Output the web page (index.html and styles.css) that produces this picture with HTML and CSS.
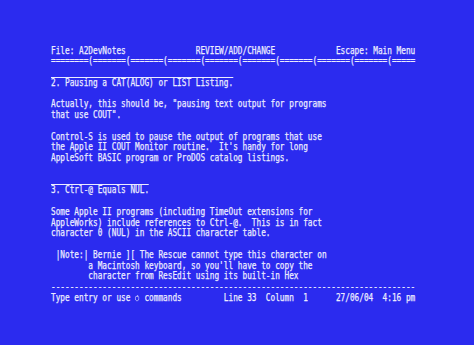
FILE: index.html
```html
<!DOCTYPE html>
<html>
<head>
<meta charset="utf-8">
<title>A2DevNotes</title>
<link rel="stylesheet" href="styles.css">
</head>
<body>
<div class="screen">
<div class="text">
<div class="row">File: A2DevNotes               REVIEW/ADD/CHANGE             Escape: Main Menu</div>
<div class="row">========(=======(=======(=======(=======(=======(=======(=======(=======(=====</div>
<div class="row"><div class="rule w39"></div></div>
<div class="row">2. Pausing a CAT(ALOG) or LIST Listing.</div>
<div class="row"> </div>
<div class="row">Actually, this should be, "pausing text output for programs</div>
<div class="row">that use COUT".</div>
<div class="row"> </div>
<div class="row">Control-S is used to pause the output of programs that use</div>
<div class="row">the Apple II COUT Monitor routine.  It's handy for long</div>
<div class="row">AppleSoft BASIC program or ProDOS catalog listings.</div>
<div class="row"> </div>
<div class="row"><div class="rule w21"></div></div>
<div class="row">3. Ctrl-@ Equals NUL.</div>
<div class="row"> </div>
<div class="row">Some Apple II programs (including TimeOut extensions for</div>
<div class="row">AppleWorks) include references to Ctrl-@.  This is in fact</div>
<div class="row">character 0 (NUL) in the ASCII character table.</div>
<div class="row"> </div>
<div class="row"> <span class="note">|Note:|</span> Bernie ][ The Rescue cannot type this character on</div>
<div class="row">        a Macintosh keyboard, so you'll have to copy the</div>
<div class="row">        character from ResEdit using its built-in Hex</div>
<div class="row">------------------------------------------------------------------------------</div>
<div class="row">Type entry or use <svg class="apple" viewBox="0 0 7 8" aria-label="open-apple"><path d="M3.5 2.6 C2.5 1.6 0.7 1.9 0.7 4 C0.7 6 2 7.6 3.5 7 C5 7.6 6.3 6 6.3 4 C6.3 1.9 4.5 1.6 3.5 2.6 Z M3.5 2.4 L4.6 0.5" fill="none" stroke="currentColor" stroke-width="0.9"/></svg> commands         Line 33  Column  1      27/06/04  4:16 pm</div>
</div>
</div>
</body>
</html>
```

FILE: styles.css
```css
html, body {
  margin: 0;
  padding: 0;
  background: #2b2bef;
}

body {
  width: 474px;
  height: 345px;
  overflow: hidden;
}

.screen {
  padding: 45.5px 0 0 51px;
  color: #ececff;
}

.text {
  font-family: "DejaVu Sans Mono", "Liberation Mono", monospace;
  font-size: 10px;
  line-height: 10.75px;
  transform: scaleX(0.7757);
  transform-origin: 0 0;
  width: 80ch;
  -webkit-text-stroke: 0.25px #ececff;
}

.row {
  height: 10.75px;
  white-space: pre;
}

.rule {
  height: 100%;
  box-sizing: border-box;
  border-bottom: 1px solid #ececff;
}

.w39 {
  width: 39ch;
}

.w21 {
  width: 21ch;
}

.apple {
  display: inline-block;
  width: 1ch;
  height: 8px;
  vertical-align: -1px;
}

.note {
  font-weight: normal;
}
```
